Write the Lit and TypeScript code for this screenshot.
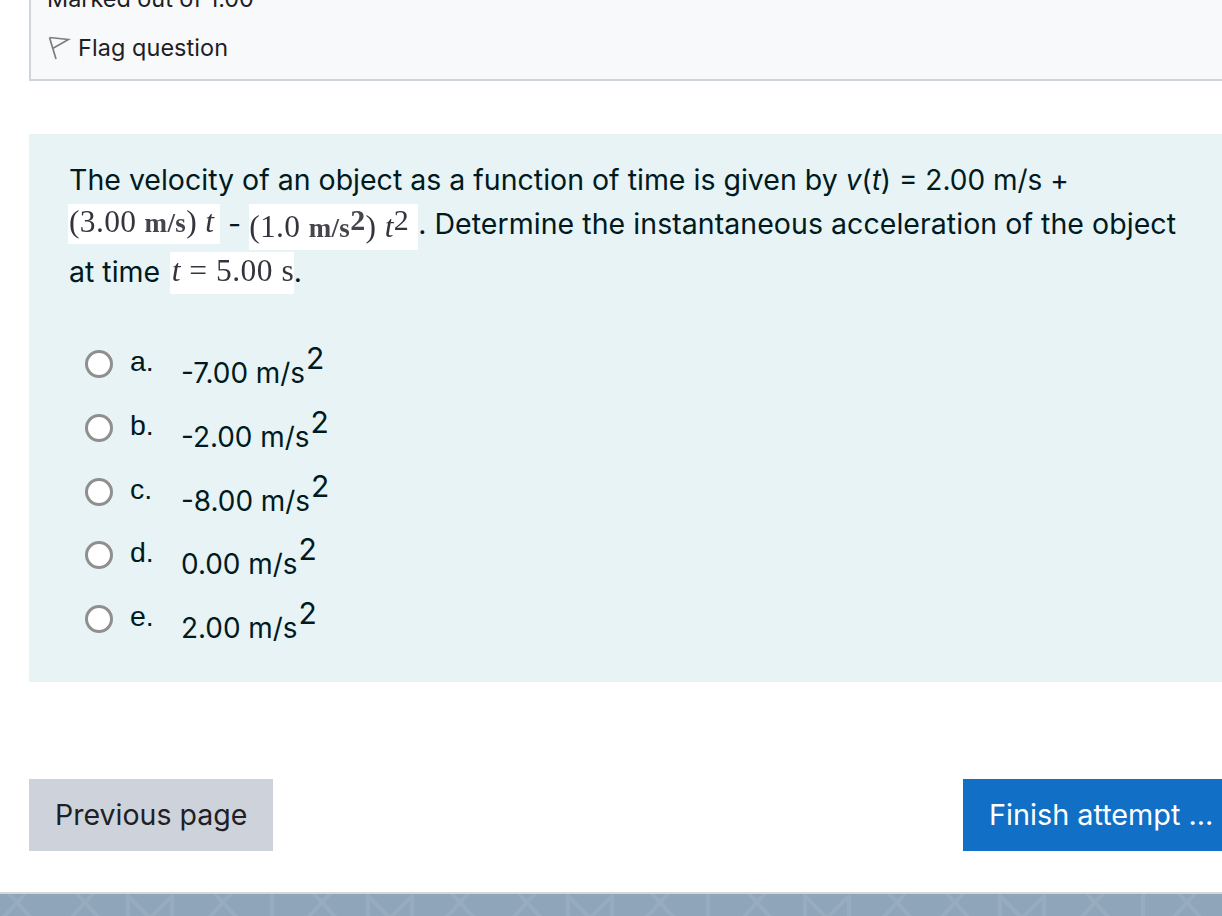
import { LitElement, html, css, svg } from "lit";
import { customElement } from "lit/decorators.js";

const options = [
  ["a.", "-7.00 m/s"],
  ["b.", "-2.00 m/s"],
  ["c.", "-8.00 m/s"],
  ["d.", "0.00 m/s"],
  ["e.", "2.00 m/s"],
];

const marks: [string, number][] = [
  ["x", 17], ["x", 85], ["m", 150], ["x", 223], ["i", 272], ["x", 322], ["m", 390], ["x", 460], ["x", 527], ["m", 590],
  ["x", 660], ["i", 708], ["x", 757], ["m", 827], ["x", 897], ["x", 955], ["m", 1022], ["x", 1095], ["i", 1143], ["x", 1187],
];

@customElement("app-root")
export class AppRoot extends LitElement {
  static styles = css`
    :host { display: block; height: 916px; overflow: hidden; background: #fff; font-family: Inter, "Liberation Sans", sans-serif; color: #1d2125; }
    .page { height: 916px; display: flex; flex-direction: column; padding-left: 29px; box-sizing: border-box; }
    .info { height: 100px; margin-top: -19px; flex: none; box-sizing: border-box; background: #f8f9fa; border: solid #ced4da; border-width: 0 0 2px 2px; padding: 6px 0 0 16px; }
    .marked { font-size: 23.4px; line-height: 24px; height: 24px; white-space: nowrap; color: #1d2125; }
    .flag { display: flex; align-items: center; gap: 7px; margin-top: 22px; font-size: 23.4px; line-height: 30px; height: 30px; color: #1d2125; }
    .flag svg { flex: none; }
    .flag span { letter-spacing: 0.1px; }
    .q { margin-top: 53px; height: 548px; flex: none; background: #e7f3f5; padding: 24px 0 0 40px; box-sizing: border-box; color: #001a1e; }
    .text { font-size: 28.5px; line-height: 44px; white-space: nowrap; }
    .line { display: flex; align-items: flex-start; white-space: pre; }
    .line.first { height: 44px; }
    .line.second { height: 48px; }
    .line.third { height: 44px; }
    .tail { font-size: 28px; }
    .wide { letter-spacing: 0.05px; }
    .img { font-family: "Liberation Serif", serif; font-size: 31.5px; background: #fff; color: #34343e; margin-top: 2px; white-space: pre; box-sizing: border-box; letter-spacing: 0.35px; }
    .img > span { filter: blur(0.35px); display: inline-block; }
    .img b { font-weight: 700; font-size: 27px; color: #45454d; }
    .img sup { font-size: 30px; line-height: 0; vertical-align: 7px; }
    .b1 { width: 152px; height: 40px; line-height: 36px; margin-left: -1px; padding-left: 1px; }
    .b2 { width: 169px; height: 46px; line-height: 46px; }
    .b3 { width: 124px; height: 42px; line-height: 38px; padding-left: 2px; letter-spacing: 0.5px; margin-left: 1.5px; }
    i { font-style: italic; }
    .opts { margin-top: 46px; display: flex; flex-direction: column; }
    .opt { height: 63.75px; display: flex; }
    .radio { width: 22px; height: 22px; border: 3px solid #8f8f8f; border-radius: 50%; background: #fff; margin: 10px 0 0 16px; flex: none; }
    .let { width: 51px; margin-left: 17px; font-size: 28.5px; line-height: 36px; margin-top: 3px; font-family: "Liberation Sans", sans-serif; }
    .ans { font-size: 27.9px; line-height: 38px; margin-top: 14px; white-space: nowrap; }
    .ans sup { font-size: 30px; line-height: 0; margin-left: 1px; vertical-align: 14px; }
    .btns { margin-top: 97px; height: 72px; display: flex; justify-content: space-between; flex: none; }
    .btn { height: 72px; display: flex; align-items: center; font-size: 28.5px; box-sizing: border-box; border: 0; font-family: inherit; white-space: nowrap; padding: 0 0 2px 26px; }
    .prev { background: #ced3db; color: #1d2125; width: 244px; }
    .finish { background: #1170c6; color: #fff; width: 259px; font-size: 28.8px; }
    .footer { margin: 41px 0 0 -29px; height: 25px; flex: none; background: #8fa5ba; border-top: 2px solid #d6d6d6; box-sizing: border-box; overflow: hidden; }
    .footer svg { display: block; }
  `;

  private pattern() {
    const parts = marks.map(([k, c]) => {
      if (k === "x") return svg`<path d="M${c - 15} -8 L${c + 16} 26 M${c + 15} -8 L${c - 16} 26"/>`;
      if (k === "m") return svg`<path d="M${c - 22} 26 V2 L${c} 24 L${c + 22} 2 V26"/>`;
      return svg`<path d="M${c} 0 V26"/>`;
    });
    return svg`<svg width="1222" height="23" viewBox="0 0 1222 23" fill="none" stroke="#97acbf" stroke-width="4">${parts}</svg>`;
  }

  render() {
    return html`<div class="page">
      <div class="info">
        <div class="marked">Marked out of 1.00</div>
        <div class="flag">
          <svg width="24" height="24" viewBox="0 0 24 24" fill="none" stroke="#7d7d7d" stroke-width="1.7"><path d="M2.5 1.5 L9 23 M2.5 1.5 L21.5 3.5 L6.5 12"/></svg>
          <span>Flag question</span>
        </div>
      </div>
      <div class="q">
        <div class="text">
          <div class="line first"><span>The velocity of an object as a function of time is given by </span><span class="tail"><i>v</i>(<i>t</i>) = 2.00 m/s +</span></div>
          <div class="line second"><div class="img b1"><span>(3.00 <b>m/s</b>) <i>t</i></span></div><span> - </span><div class="img b2"><span>(1.0 <b>m/s<sup>2</sup></b>) <i>t</i><sup>2</sup></span></div><span class="wide">. Determine the instantaneous acceleration of the object</span></div>
          <div class="line third"><span>at time </span><div class="img b3"><span><i>t</i> = 5.00 s</span></div><span>.</span></div>
        </div>
        <div class="opts">
          ${options.map(([l, a]) => html`<div class="opt"><div class="radio"></div><div class="let">${l}</div><div class="ans">${a}<sup>2</sup></div></div>`)}
        </div>
      </div>
      <div class="btns">
        <button class="btn prev">Previous page</button>
        <button class="btn finish">Finish attempt ...</button>
      </div>
      <div class="footer">${this.pattern()}</div>
    </div>`;
  }
}
